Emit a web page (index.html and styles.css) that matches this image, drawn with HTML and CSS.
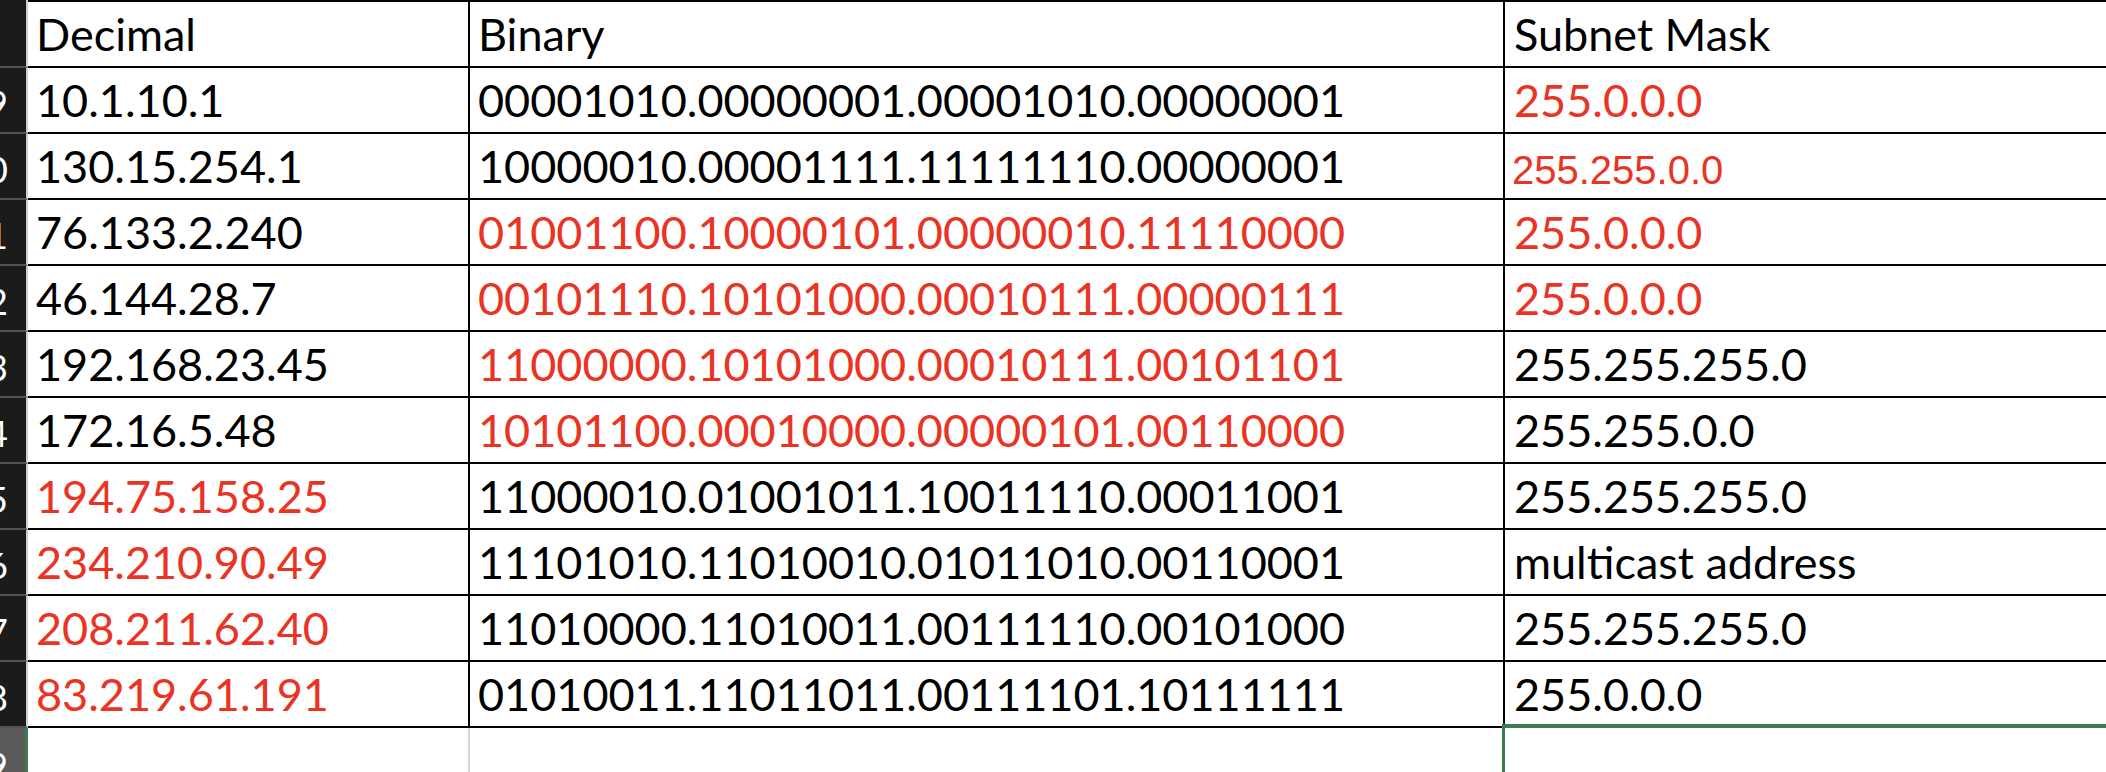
FILE: index.html
```html
<!DOCTYPE html>
<html>
<head>
<meta charset="utf-8">
<title>Sheet</title>
<link rel="stylesheet" href="styles.css">
</head>
<body>
<div class="sheet">
  <div class="row first">
    <div class="rh">8</div>
    <div class="cell">Decimal</div>
    <div class="cell">Binary</div>
    <div class="cell last">Subnet Mask</div>
  </div>
  <div class="row">
    <div class="rh">9</div>
    <div class="cell">10.1.10.1</div>
    <div class="cell">00001010.00000001.00001010.00000001</div>
    <div class="cell last red">255.0.0.0</div>
  </div>
  <div class="row">
    <div class="rh">10</div>
    <div class="cell">130.15.254.1</div>
    <div class="cell">10000010.00001111.11111110.00000001</div>
    <div class="cell last red"><span class="arial">255.255.0.0</span></div>
  </div>
  <div class="row">
    <div class="rh">11</div>
    <div class="cell">76.133.2.240</div>
    <div class="cell red">01001100.10000101.00000010.11110000</div>
    <div class="cell last red">255.0.0.0</div>
  </div>
  <div class="row">
    <div class="rh">12</div>
    <div class="cell">46.144.28.7</div>
    <div class="cell red">00101110.10101000.00010111.00000111</div>
    <div class="cell last red">255.0.0.0</div>
  </div>
  <div class="row">
    <div class="rh">13</div>
    <div class="cell">192.168.23.45</div>
    <div class="cell red">11000000.10101000.00010111.00101101</div>
    <div class="cell last">255.255.255.0</div>
  </div>
  <div class="row">
    <div class="rh">14</div>
    <div class="cell">172.16.5.48</div>
    <div class="cell red">10101100.00010000.00000101.00110000</div>
    <div class="cell last">255.255.0.0</div>
  </div>
  <div class="row">
    <div class="rh">15</div>
    <div class="cell red">194.75.158.25</div>
    <div class="cell">11000010.01001011.10011110.00011001</div>
    <div class="cell last">255.255.255.0</div>
  </div>
  <div class="row">
    <div class="rh">16</div>
    <div class="cell red">234.210.90.49</div>
    <div class="cell">11101010.11010010.01011010.00110001</div>
    <div class="cell last">multicast address</div>
  </div>
  <div class="row">
    <div class="rh">17</div>
    <div class="cell red">208.211.62.40</div>
    <div class="cell">11010000.11010011.00111110.00101000</div>
    <div class="cell last">255.255.255.0</div>
  </div>
  <div class="row">
    <div class="rh">18</div>
    <div class="cell red">83.219.61.191</div>
    <div class="cell">01010011.11011011.00111101.10111111</div>
    <div class="cell last">255.0.0.0</div>
  </div>
  <div class="row empty">
    <div class="rh selected">19</div>
    <div class="cell"></div>
    <div class="cell"></div>
    <div class="cell last active"></div>
  </div>
</div>
</body>
</html>
```
FILE: styles.css
```css
html, body {
  margin: 0;
  padding: 0;
  background: #ffffff;
  overflow: hidden;
}

body {
  width: 2106px;
  height: 772px;
  font-family: "Lato", "Liberation Sans", sans-serif;
}

.sheet {
  display: flex;
  flex-direction: column;
}

.row {
  display: grid;
  grid-template-columns: 28px 442px 1035px 1fr;
  height: 66px;
}

.row.first {
  height: 68px;
}

.rh {
  box-sizing: border-box;
  background: #1b1b1b;
  border-right: 2px solid #cfcfcf;
  border-bottom: 2px solid #535353;
  color: #ffffff;
  font-size: 36px;
  line-height: 36px;
  text-align: right;
  white-space: nowrap;
  overflow: hidden;
  direction: rtl;
  padding-right: 18px;
  display: flex;
  align-items: flex-end;
  justify-content: flex-start;
  padding-bottom: 11px;
}

.row.first .rh {
  color: #1b1b1b;
}

.rh.selected {
  background: #5a5a5a;
  border-right: 3px solid #3c7a4f;
  border-bottom: none;
  padding-right: 17px;
}

.cell {
  box-sizing: border-box;
  border-right: 2px solid #000000;
  border-bottom: 2px solid #000000;
  font-size: 45px;
  line-height: 45px;
  color: #000000;
  white-space: nowrap;
  overflow: hidden;
  padding-left: 8px;
  padding-bottom: 9px;
  display: flex;
  align-items: flex-end;
}

.row.first .cell {
  border-top: 2px solid #000000;
}

.cell.last {
  border-right: none;
  padding-left: 9px;
}

.red {
  color: #ea3323;
}

.arial {
  font-family: "Liberation Sans", Arial, sans-serif;
  font-size: 40px;
  line-height: 44px;
  margin-left: -2px;
  margin-bottom: -3px;
}

.row.empty .cell {
  border-right: 2px solid #d6d6d6;
  border-bottom: none;
}

.row.empty .cell.last {
  border-right: none;
}

.cell.active {
  position: relative;
  overflow: visible;
}

.cell.active::before {
  content: "";
  position: absolute;
  left: -3px;
  top: -4px;
  right: 0;
  bottom: 0;
  border-top: 4px solid #3c7a4f;
  border-left: 3px solid #3c7a4f;
}
```
